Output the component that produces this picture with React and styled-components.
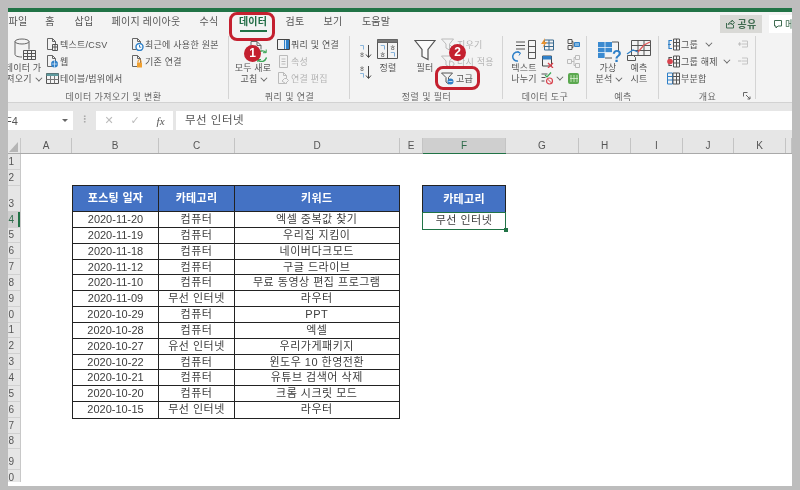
import React from 'react'
import styled, { createGlobalStyle } from 'styled-components'

const Global = createGlobalStyle`
  html, body { margin: 0; padding: 0; background: #bdbdbd; }
  body { font-family: "Liberation Sans", "Noto Sans CJK KR", sans-serif; color: #444; }
`

const Page = styled.div`
  width: 800px;
  height: 490px;
  padding: 8px;
  box-sizing: border-box;
  overflow: hidden;
  background: #bdbdbd;
`
const Win = styled.div`
  position: relative;
  height: 474px;
  background: #fff;
  overflow: hidden;
  border-top: 4px solid #217346;
  filter: blur(.4px);
`

/* tab strip */
const TabBar = styled.div`
  height: 23px;
  background: #f3f3f3;
  display: flex;
  align-items: center;
  font-size: 10px;
  color: #555;
`
const Tab = styled.div`
  position: relative;
  width: ${p => p.$w}px;
  flex: none;
  text-align: center;
  height: 23px;
  line-height: 20px;
  letter-spacing: .2px;
  ${p => p.$on && `
    color: #1f6b43;
    font-weight: 700;
    &::after { content: ''; position: absolute; left: 18px; right: 17px; bottom: 3px; height: 2px; background: #217346; }
  `}
`
const TabEnd = styled.div`
  margin-left: auto;
  display: flex;
  gap: 7px;
  align-items: center;
`
const ShareBtn = styled.div`
  width: 42px;
  height: 18px;
  background: #d9d9d6;
  display: flex;
  align-items: center;
  justify-content: center;
  gap: 3px;
  font-size: 10px;
  font-weight: 700;
  letter-spacing: .3px;
  color: #3f6b50;
`
const NoteBtn = styled.div`
  width: 23px;
  height: 18px;
  background: #fff;
  display: flex;
  align-items: center;
  gap: 3px;
  padding-left: 5px;
  box-sizing: border-box;
  font-size: 10px;
  color: #3f6b50;
  overflow: hidden;
  white-space: nowrap;
`

/* ribbon */
const Ribbon = styled.div`
  height: 68px;
  box-sizing: border-box;
  background: #f3f3f3;
  border-bottom: 1px solid #d2d2d2;
  display: flex;
  font-size: 9px;
  color: #555;
`
const Group = styled.div`
  position: relative;
  width: ${p => p.$w}px;
  flex: none;
  display: flex;
  flex-direction: column;
  &::after {
    content: '';
    position: absolute;
    right: 0;
    top: 1px;
    bottom: 3px;
    width: 1px;
    background: #d4d4d4;
  }
`
const GroupBody = styled.div`
  flex: 1;
  display: flex;
  padding-left: ${p => p.$pad || 0}px;
  min-height: 0;
`
const GroupLabel = styled.div`
  position: relative;
  height: 12px;
  line-height: 14px;
  padding-right: ${p => p.$pr || 0}px;
  text-align: center;
  font-size: 9px;
  color: #666;
  letter-spacing: .45px;
`
const Launcher = styled.span`
  position: absolute;
  right: 5px;
  top: 2px;
  display: flex;
`
const Big = styled.div`
  width: ${p => p.$w}px;
  margin-left: ${p => p.$ml || 0}px;
  flex: none;
  padding-top: 3px;
  display: flex;
  flex-direction: column;
  align-items: center;
  line-height: 11px;
  text-align: center;
  white-space: nowrap;
  letter-spacing: .2px;
  & > svg { height: 24px; margin-bottom: 1px; flex: none; }
`
const Small = styled.div`
  width: ${p => p.$w}px;
  margin-left: ${p => p.$ml || 0}px;
  flex: none;
  display: flex;
  flex-direction: column;
  padding-top: 1px;
`
const Item = styled.div`
  height: 17px;
  display: flex;
  align-items: center;
  gap: 1px;
  white-space: nowrap;
  color: ${p => p.$dim ? '#b4b4b4' : '#555'};
  letter-spacing: .25px;
`
const Caret = styled.span`
  display: inline-block;
  width: 4px;
  height: 4px;
  margin-left: ${p => p.$ml || 3}px;
  border-right: 1px solid #666;
  border-bottom: 1px solid #666;
  transform: rotate(45deg) translateY(-2px);
`
const SortStack = styled.div`
  width: 16px;
  flex: none;
  padding-top: 7px;
  display: flex;
  flex-direction: column;
  gap: 3px;
`

/* highlight marks */
const Ring = styled.div`
  position: absolute;
  left: ${p => p.$x}px;
  top: ${p => p.$y}px;
  width: ${p => p.$w}px;
  height: ${p => p.$h}px;
  border: 3px solid #c4202f;
  border-radius: 8px;
  box-sizing: border-box;
`
const Badge = styled.div`
  position: absolute;
  left: ${p => p.$x}px;
  top: ${p => p.$y}px;
  width: 17px;
  height: 17px;
  border-radius: 50%;
  background: #c4202f;
  color: #fff;
  font: 700 12px/17px "Liberation Sans", sans-serif;
  text-align: center;
`

/* formula bar */
const FormulaRow = styled.div`
  height: 35px;
  box-sizing: border-box;
  background: #e6e6e6;
  padding-top: 8px;
  display: flex;
  align-items: flex-start;
`
const NameBox = styled.div`
  width: 65px;
  height: 19px;
  flex: none;
  background: #fff;
  display: flex;
  justify-content: space-between;
  align-items: center;
  padding-right: 5px;
  box-sizing: border-box;
  font-size: 11px;
  color: #555;
  overflow: hidden;
  & > span { margin-left: -3px; }
`
const NameArrow = styled.i`
  width: 0;
  height: 0;
  border-left: 3px solid transparent;
  border-right: 3px solid transparent;
  border-top: 3px solid #666;
`
const Grip = styled.div`
  width: 23px;
  flex: none;
  text-align: center;
  font: 700 9px/17px "DejaVu Sans", sans-serif;
  color: #aaa;
`
const FxBox = styled.div`
  width: 77px;
  height: 19px;
  flex: none;
  background: #fff;
  display: flex;
  align-items: center;
  justify-content: space-around;
  color: #bbb;
  font: 11px "DejaVu Sans", sans-serif;
`
const FxMark = styled.i`
  font: italic 11px "Liberation Serif", serif;
  color: #555;
`
const Input = styled.div`
  flex: 1;
  height: 19px;
  margin-left: 3px;
  background: #fff;
  padding-left: 9px;
  font-size: 11.5px;
  line-height: 18px;
  letter-spacing: .5px;
  color: #555;
`

/* sheet */
const ColHeads = styled.div`
  height: 16px;
  background: #e6e6e6;
  border-bottom: 1px solid #a9a9a9;
  display: flex;
  box-sizing: border-box;
`
const Corner = styled.div`
  width: 13px;
  flex: none;
  display: flex;
  justify-content: flex-end;
  align-items: flex-end;
  padding: 0 2px 1px 0;
  box-sizing: border-box;
  border-right: 1px solid #c8c8c8;
`
const ColHead = styled.div`
  width: ${p => p.$w}px;
  flex: none;
  box-sizing: border-box;
  text-align: center;
  font-size: 10px;
  line-height: 15px;
  color: #555;
  border-right: 1px solid #c4c4c4;
  ${p => p.$on && `
    background: #cfcfcf;
    color: #2f6b4b;
    box-shadow: 0 1px 0 #217346;
  `}
`
const SheetBody = styled.div`
  display: flex;
  height: 328px;
`
const RowHeads = styled.div`
  width: 13px;
  flex: none;
  background: #e6e6e6;
  border-right: 1px solid #c8c8c8;
  box-sizing: border-box;
  overflow: hidden;
`
const RowHead = styled.div`
  height: ${p => p.$h}px;
  box-sizing: border-box;
  display: flex;
  justify-content: flex-end;
  align-items: flex-end;
  padding-right: 6px;
  font-size: 10px;
  line-height: 15px;
  color: #555;
  border-bottom: 1px solid #d0d0d0;
  & > span { flex: none; }
  ${p => p.$on && `
    background: #cfcfcf;
    color: #2f6b4b;
    box-shadow: inset -2px 0 0 #217346;
  `}
`
const Cells = styled.div`
  flex: 1;
  padding: 31px 0 0 51px;
  display: flex;
  align-items: flex-start;
  gap: 22.5px;
`
const DataGrid = styled.div`
  display: grid;
  grid-template-columns: 86px 76px 163.5px;
  grid-template-rows: 26px;
  grid-auto-rows: 15.85px;
  border: 1.5px solid #222;
  border-top-width: 1px;
  box-sizing: border-box;
`
const HeadCell = styled.div`
  background: #4472c4;
  border-right: ${p => p.$last ? 0 : '1px solid #222'};
  border-bottom: 1px solid #222;
  box-sizing: border-box;
  color: #fff;
  font-weight: 700;
  font-size: 11px;
  line-height: 25px;
  text-align: center;
  letter-spacing: .3px;
`
const Cell = styled.div`
  border-right: ${p => p.$last ? 0 : '1px solid #222'};
  border-bottom: ${p => p.$end ? 0 : '1px solid #222'};
  box-sizing: border-box;
  font-size: 11px;
  line-height: 14.5px;
  text-align: center;
  letter-spacing: ${p => p.$date ? 0 : '.5px'};
  color: #3c3c3c;
  white-space: nowrap;
`
const Lookup = styled.div`
  width: 84px;
`
const LookupHead = styled.div`
  height: 27px;
  background: #4472c4;
  border: 1px solid #222;
  border-bottom: 0;
  box-sizing: border-box;
  color: #fff;
  font-weight: 700;
  font-size: 11px;
  line-height: 26px;
  text-align: center;
  letter-spacing: .3px;
`
const Active = styled.div`
  position: relative;
  height: 18px;
  border: 1.5px solid #217346;
  box-sizing: border-box;
  font-size: 11px;
  line-height: 14px;
  text-align: center;
  letter-spacing: .5px;
  color: #3c3c3c;
  &::after {
    content: '';
    position: absolute;
    right: -3px;
    bottom: -3px;
    width: 4px;
    height: 4px;
    background: #217346;
  }
`

/* icons */
const G = '#666'
const B = '#2f80c8'
const Ic = ({ w = 13, h = 13, children }) => (
  <svg width={w} height={h} viewBox={`0 0 ${w} ${h}`} fill="none" style={{ flex: 'none' }}>{children}</svg>
)
const Doc = ({ c = G }) => <path d="M1.500 .5h5l3 3v8h-8z M6.500 .5v3h3" stroke={c} />

const DbIcon = () => (
  <svg width="26" height="24" viewBox="-4 0 26 24" fill="none">
    <ellipse cx="8" cy="3.500" rx="7" ry="2.500" stroke={G} />
    <path d="M1 3.500v13c0 1.500 3 2.500 7 2.500M15 3.500v8" stroke={G} />
    <path d="M9.500 12.500h12v9h-12z" fill="#f3f3f3" />
    <path d="M9.500 12.500h12v9h-12zM9.500 15.500h12M9.500 18.500h12M13.500 12.500v9M17.500 12.500v9" stroke="#555" />
  </svg>
)
const CsvIcon = () => <Ic><Doc /><path d="M6.500 6.500h5v6h-5zM6.500 9h5M9 6.500v6" stroke="#555" fill="#f3f3f3" /></Ic>
const WebIcon = () => <Ic><Doc /><circle cx="8.500" cy="9" r="3.500" fill={B} /><path d="M5.500 9h6M8.500 5.500v7" stroke="#fff" strokeWidth=".6" /></Ic>
const TableIcon = () => <Ic><path d="M.5 1.500h12v10H.5z" stroke="#555" /><path d="M.5 1.500h12v2.500H.5z" fill="#5f9a9e" /><path d="M.5 7.500h12M4.500 4v7.500M8.500 4v7.500" stroke="#777" /></Ic>
const RecentIcon = () => <Ic><Doc /><circle cx="8.500" cy="9" r="3.500" fill="#fff" stroke={B} strokeWidth="1.400" /><path d="M8.500 7v2.200h1.800" stroke={B} /></Ic>
const ExistIcon = () => <Ic><Doc /><path d="M6 7.500h5v5H6z" fill="#f0a030" /><path d="M7 7.500V6c0-1.800 3-1.800 3 0v1.500" stroke="#e08a20" /></Ic>
const RefreshIcon = () => (
  <svg width="28" height="24" viewBox="-2 0 28 24" fill="none">
    <path d="M10 3.500h6l4 4v4M10 3.500v11h3M16 3.500v4h4" stroke={G} />
    <path d="M16.500 16.500a5 5 0 0 1 8.500-2M25.500 19.500a5 5 0 0 1-8.500 2.500" stroke="#3aa655" strokeWidth="1.400" />
    <path d="M25.200 11.500v3.200H22M16.800 24.500v-3H20" stroke="#3aa655" />
  </svg>
)
const PaneIcon = () => <Ic><path d="M.5 1.500h12v10H.5z" stroke="#444" /><path d="M7 2h5v9H7z" fill={B} /><path d="M8.500 2v9" stroke="#cfe3f5" /></Ic>
const PropIcon = () => <Ic><path d="M2.500 .5h8v12h-8z" stroke="#bbb" /><path d="M4.500 4h4M4.500 6.500h4M4.500 9h4" stroke="#bbb" /></Ic>
const LinkEditIcon = () => <Ic><path d="M1.500 .5h5l3 3v8h-8zM6.500 .5v3h3" stroke="#bbb" /><path d="M5 9l2.500-2.500 2 0 2 2-3 3z" stroke="#bbb" fill="#f3f3f3" /></Ic>
const SortIcon = ({ a, b }) => (
  <svg width="15" height="18" viewBox="0 0 15 18" fill="none">
    <text x="0" y="7.500" fontSize="6.500" fill={a === 'ㄱ' ? B : G} fontFamily="Noto Sans CJK KR">{a}</text>
    <text x="0" y="15" fontSize="6.500" fill={b === 'ㄱ' ? B : G} fontFamily="Noto Sans CJK KR">{b}</text>
    <path d="M9.500 3v12M7 12.500l2.500 3 2.500-3" stroke="#444" />
  </svg>
)
const SortBigIcon = () => (
  <svg width="22" height="24" viewBox="0 0 22 24" fill="none">
    <path d="M.5 1.500h20v19H.5zM.5 4.500h20M10.500 4.500v16" stroke="#555" />
    <path d="M.5 1.500h20v3H.5z" fill="#777" />
    <text x="2.500" y="12" fontSize="7" fill={B} fontFamily="Noto Sans CJK KR">ㄱ</text>
    <text x="2.500" y="19" fontSize="7" fill={G} fontFamily="Noto Sans CJK KR">ㅎ</text>
    <text x="12.500" y="12" fontSize="7" fill={G} fontFamily="Noto Sans CJK KR">ㅎ</text>
    <text x="12.500" y="19" fontSize="7" fill={B} fontFamily="Noto Sans CJK KR">ㄱ</text>
  </svg>
)
const FunnelBig = () => (
  <svg width="22" height="24" viewBox="0 0 22 24" fill="none">
    <path d="M1 2.500h20l-7 9v10l-6-3v-7z" stroke="#555" strokeWidth="1.200" fill="#fafafa" />
  </svg>
)
const FunnelDim = ({ children }) => (
  <Ic w={15}><path d="M.5 1h12L8.500 6v6L5 10V6z" stroke="#bbb" />{children}</Ic>
)
const FunnelAdv = () => (
  <Ic w={14}>
    <path d="M.5 1h11L7.500 5.500V12L5 10V5.500z" stroke="#555" />
    <circle cx="9.500" cy="9.500" r="3" fill={B} />
    <path d="M7.500 9.500h4" stroke="#fff" strokeWidth=".7" />
  </Ic>
)
const ColumnsIcon = () => (
  <svg width="26" height="24" viewBox="0 0 26 24" fill="none">
    <path d="M5 4h9M5 7.500h9M5 11h9" stroke="#555" />
    <path d="M17.500 2.500h7v18h-7zM17.500 8.500h7M17.500 14.500h7" stroke="#555" />
    <path d="M9 15a4.500 4.500 0 1 0-2 8" stroke={B} strokeWidth="1.500" />
    <path d="M6.500 13.500l3 1.500-1.500 2.500" stroke={B} />
  </svg>
)
const FlashIcon = () => <Ic><path d="M3.500 2h9v10h-9zM3.500 5h9M3.500 8.500h9M8 2v10" stroke="#3a6a8f" /><path d="M4 0L0 6h3L1.500 10 6 4H3.500z" fill="#e8912d" /></Ic>
const DupIcon = () => <Ic><path d="M1.500 1h9v10h-9z" stroke="#444" /><path d="M1.500 1h9v3.500h-9z" fill={B} /><path d="M7 8l5 5M12 8l-5 5" stroke="#d9434e" strokeWidth="1.300" /></Ic>
const ValidIcon = () => <Ic><path d="M.5 2h6M.5 5.500h4M.5 9h3" stroke="#555" /><path d="M4 3l2 2 4-4.500" stroke="#3aa655" strokeWidth="1.200" /><circle cx="8.500" cy="9" r="3" stroke="#d9434e" strokeWidth="1.200" /><path d="M6.500 7l4 4" stroke="#d9434e" /></Ic>
const MergeIcon = () => <Ic><path d="M1 1.500h4v4H1zM1 7.500h4v4H1z" stroke="#555" /><path d="M7.500 4.500h5v4h-5z" fill="#7fb5e0" stroke={B} /><path d="M5 3.500h1v6H5" stroke="#555" /></Ic>
const RelIcon = () => <Ic><path d="M8.500 .5h4v4h-4zM8.500 8.500h4v4h-4zM.5 4.500h4v4h-4zM4.500 6.500h2.500M7 2.500v8M7 2.500h1.500M7 10.500h1.500" stroke="#bbb" /></Ic>
const ModelIcon = () => <Ic><rect x="1" y="1" width="11" height="11" rx="2" fill="#5ba84f" /><path d="M4 3v7M7 3v7M10 3v7M3 6.500h8" stroke="#d9f0d0" strokeWidth=".8" /></Ic>
const WhatIfIcon = () => (
  <svg width="26" height="24" viewBox="0 0 26 24" fill="none">
    <path d="M3 4h14v10.500H3zM3 14.500h7V20H3z" fill="#3b8ad0" />
    <path d="M3 9.500h14M10 4v16M3 14.500h14" stroke="#e8f1f9" strokeWidth=".8" />
    <path d="M17 4h6.500v10M10 20h7" stroke="#555" />
    <text x="17" y="23.500" fontSize="16" fontWeight="700" fill={B} fontFamily="Liberation Sans">?</text>
  </svg>
)
const ForecastIcon = () => (
  <svg width="26" height="24" viewBox="0 0 26 24" fill="none">
    <path d="M5.500 2.500h19v15h-19zM5.500 7.500h19M5.500 12.500h19M12 2.500v15M18 2.500v15" stroke="#555" />
    <path d="M1 16l6-4 5 2" stroke={B} strokeWidth="1.300" />
    <path d="M12 14l6-7 6-3" stroke="#e05a5a" strokeWidth="1.300" />
    <path d="M1.500 17.500h6l2 2v3h-8z" stroke="#555" fill="#f3f3f3" />
  </svg>
)
const GroupIcon = ({ c = B, red }) => (
  <Ic>
    <path d="M6.500 1h6v11h-6zM6.500 4.500h6M6.500 8h6M9.500 1v11" stroke="#555" />
    <path d="M5 2.500H2v8h3" stroke={c} strokeWidth="1.200" />
    {red ? <circle cx="3" cy="6.500" r="2.800" fill="#d9434e" /> : <path d="M1 6.500h3" stroke={c} />}
  </Ic>
)
const SubtotalIcon = () => <Ic><path d="M.5 1h5v11h-5zM.5 4.500h5M.5 8h5" stroke={B} /><path d="M6 1h6.500v11H6zM6 4.500h6.500M6 8h6.500M9.500 1v11" stroke="#555" /></Ic>
const SideIcon = ({ plus }) => (
  <Ic w={10}>
    <path d="M4 3h5.500M4 6h5.500M4 9h5.500M9.500 3v6" stroke="#c4c4c4" />
    <path d={plus ? 'M0 6h3.500M1.700 4.200v3.600' : 'M0 6h3.500'} stroke="#bbb" />
  </Ic>
)
const ShareIcon = () => <Ic w={9} h={11}><path d="M.5 5v5h7V7M2 6.500c1-2 2.500-3 4-3V2l2.500 2.800L6 7V5.500C4.500 5.500 3.300 5.800 2 6.500z" stroke="#3f6b50" /></Ic>
const NoteIcon = () => <Ic w={8} h={11}><path d="M.5 2.500h7v5.500H4L2 10V8H.5z" stroke="#3f6b50" /></Ic>
const LaunchIcon = () => <Ic w={8} h={8}><path d="M.5.5h4M.5.5v4M3 3l4 4M7 4.500V7H4.500" stroke="#666" /></Ic>
const CornerIcon = () => <Ic w={9} h={10}><path d="M9 0v10H0z" fill="#b5b5b5" /></Ic>

const tabs = [
  ['파일', 20], ['홈', 44], ['삽입', 24], ['페이지 레이아웃', 100], ['수식', 26], ['데이터', 62, true],
  ['검토', 22], ['보기', 54], ['도움말', 32],
]
const cols = [['A', 51], ['B', 87], ['C', 76], ['D', 165], ['E', 23], ['F', 83, true], ['G', 73], ['H', 52], ['I', 52], ['J', 51], ['K', 52], ['', 6]]
const rowSizes = [15.85, 15.85, 26, 15.85, 15.85, 15.85, 15.85, 15.85, 15.85, 15.85, 15.85, 15.85, 15.85, 15.85, 15.85, 15.85, 15.85, 15.85, 21, 16]
const data = [
  ['2020-11-20', '컴퓨터', '엑셀 중복값 찾기'],
  ['2020-11-19', '컴퓨터', '우리집 지킴이'],
  ['2020-11-18', '컴퓨터', '네이버다크모드'],
  ['2020-11-12', '컴퓨터', '구글 드라이브'],
  ['2020-11-10', '컴퓨터', '무료 동영상 편집 프로그램'],
  ['2020-11-09', '무선 인터넷', '라우터'],
  ['2020-10-29', '컴퓨터', 'PPT'],
  ['2020-10-28', '컴퓨터', '엑셀'],
  ['2020-10-27', '유선 인터넷', '우리가게패키지'],
  ['2020-10-22', '컴퓨터', '윈도우 10 한영전환'],
  ['2020-10-21', '컴퓨터', '유튜브 검색어 삭제'],
  ['2020-10-20', '컴퓨터', '크롬 시크릿 모드'],
  ['2020-10-15', '무선 인터넷', '라우터'],
]

export default function App() {
  return (
    <Page>
      <Global />
      <Win>
        <TabBar>
          {tabs.map(([t, w, on]) => <Tab key={t} $w={w} $on={on}>{t}</Tab>)}
          <TabEnd>
            <ShareBtn><ShareIcon />공유</ShareBtn>
            <NoteBtn><NoteIcon />메모</NoteBtn>
          </TabEnd>
        </TabBar>

        <Ribbon>
          <Group $w={221}>
            <GroupBody>
              <Big $w={46} $ml={-8}><DbIcon />데이터 가<span>져오기<Caret /></span></Big>
              <Small $w={85}>
                <Item><CsvIcon />텍스트/CSV</Item>
                <Item><WebIcon />웹</Item>
                <Item><TableIcon />테이블/범위에서</Item>
              </Small>
              <Small $w={90}>
                <Item><RecentIcon />최근에 사용한 원본</Item>
                <Item><ExistIcon />기존 연결</Item>
              </Small>
            </GroupBody>
            <GroupLabel $pr={10}>데이터 가져오기 및 변환</GroupLabel>
          </Group>

          <Group $w={121}>
            <GroupBody $pad={2}>
              <Big $w={44}><RefreshIcon />모두 새로<span>고침<Caret /></span></Big>
              <Small $w={70} $ml={2}>
                <Item><PaneIcon />쿼리 및 연결</Item>
                <Item $dim><PropIcon />속성</Item>
                <Item $dim><LinkEditIcon />연결 편집</Item>
              </Small>
            </GroupBody>
            <GroupLabel>쿼리 및 연결</GroupLabel>
          </Group>

          <Group $w={153}>
            <GroupBody $pad={9}>
              <SortStack>
                <SortIcon a="ㄱ" b="ㅎ" />
                <SortIcon a="ㅎ" b="ㄱ" />
              </SortStack>
              <Big $w={24} $ml={1}><SortBigIcon />정렬</Big>
              <Big $w={24} $ml={13}><FunnelBig />필터</Big>
              <Small $w={65} $ml={4}>
                <Item $dim><FunnelDim><path d="M9 7l4 4M13 7l-4 4" stroke="#bbb" /></FunnelDim>지우기</Item>
                <Item $dim><FunnelDim><path d="M9 7a2.500 2.500 0 1 1 0 4" stroke="#bbb" /></FunnelDim>다시 적용</Item>
                <Item><FunnelAdv />고급</Item>
              </Small>
            </GroupBody>
            <GroupLabel>정렬 및 필터</GroupLabel>
          </Group>

          <Group $w={84}>
            <GroupBody $pad={6}>
              <Big $w={30}><ColumnsIcon />텍스트<span>나누기</span></Big>
              <Small $w={20} $ml={2}>
                <Item><FlashIcon /></Item>
                <Item><DupIcon /></Item>
                <Item><ValidIcon /><Caret $ml={1} /></Item>
              </Small>
              <Small $w={14} $ml={6}>
                <Item><MergeIcon /></Item>
                <Item><RelIcon /></Item>
                <Item><ModelIcon /></Item>
              </Small>
            </GroupBody>
            <GroupLabel>데이터 도구</GroupLabel>
          </Group>

          <Group $w={72}>
            <GroupBody $pad={5}>
              <Big $w={32}><WhatIfIcon />가상<span>분석<Caret /></span></Big>
              <Big $w={30}><ForecastIcon />예측<span>시트</span></Big>
            </GroupBody>
            <GroupLabel>예측</GroupLabel>
          </Group>

          <Group $w={97}>
            <GroupBody $pad={8}>
              <Small $w={71}>
                <Item><GroupIcon />그룹<Caret $ml={6} /></Item>
                <Item><GroupIcon c="#555" red />그룹 해제<Caret $ml={4} /></Item>
                <Item><SubtotalIcon />부분합</Item>
              </Small>
              <Small $w={14}>
                <Item><SideIcon plus /></Item>
                <Item><SideIcon /></Item>
              </Small>
            </GroupBody>
            <GroupLabel>개요<Launcher><LaunchIcon /></Launcher></GroupLabel>
          </Group>
        </Ribbon>

        <FormulaRow>
          <NameBox><span>F4</span><NameArrow /></NameBox>
          <Grip>⋮</Grip>
          <FxBox><span>✕</span><span>✓</span><FxMark>fx</FxMark></FxBox>
          <Input>무선 인터넷</Input>
        </FormulaRow>

        <ColHeads>
          <Corner><CornerIcon /></Corner>
          {cols.map(([c, w, on], i) => <ColHead key={i} $w={w} $on={on}>{c}</ColHead>)}
        </ColHeads>

        <SheetBody>
          <RowHeads>
            {rowSizes.map((h, i) => (
              <RowHead key={i} $h={h} $on={i === 3}><span>{i + 1}</span></RowHead>
            ))}
          </RowHeads>
          <Cells>
            <DataGrid>
              <HeadCell>포스팅 일자</HeadCell>
              <HeadCell>카테고리</HeadCell>
              <HeadCell $last>키워드</HeadCell>
              {data.map((row, r) => row.map((v, c) => (
                <Cell key={`${r}-${c}`} $date={c === 0} $last={c === 2} $end={r === data.length - 1}>{v}</Cell>
              )))}
            </DataGrid>
            <Lookup>
              <LookupHead>카테고리</LookupHead>
              <Active>무선 인터넷</Active>
            </Lookup>
          </Cells>
        </SheetBody>

        <Ring $x={221} $y={0} $w={46} $h={29} />
        <Badge $x={236} $y={33}>1</Badge>
        <Ring $x={427} $y={54} $w={45} $h={24} />
        <Badge $x={441} $y={32}>2</Badge>
      </Win>
    </Page>
  )
}
